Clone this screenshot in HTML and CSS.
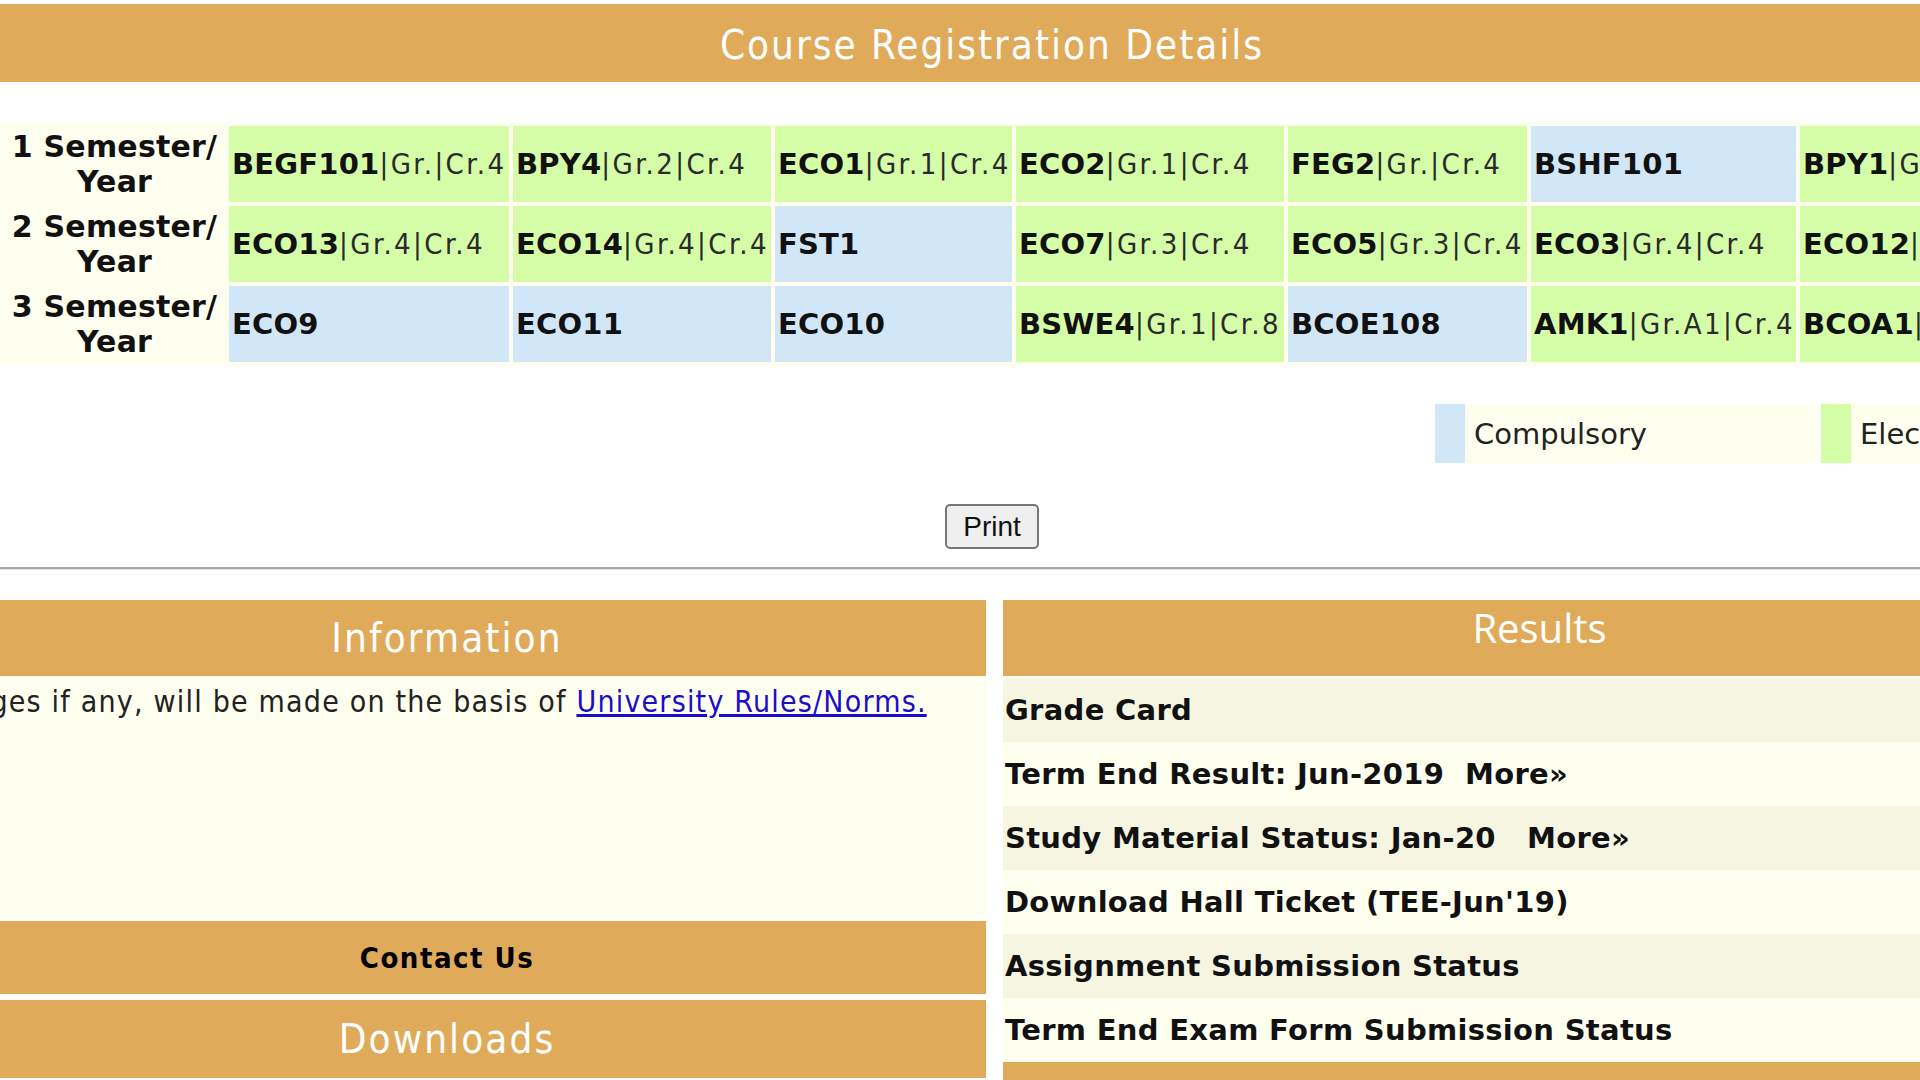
FILE: index.html
```html
<!DOCTYPE html>
<html lang="en">
<head>
<meta charset="utf-8">
<title>Course Registration Details</title>
<link rel="stylesheet" href="styles.css">
</head>
<body>
<div class="page">
  <div class="title-bar">Course Registration Details</div>

  <div class="reg-table">
    <div class="lbl">1 Semester/<br>Year</div>
    <div class="cell el"><b>BEGF101</b><span>|Gr.|Cr.4</span></div>
    <div class="cell el"><b>BPY4</b><span>|Gr.2|Cr.4</span></div>
    <div class="cell el"><b>ECO1</b><span>|Gr.1|Cr.4</span></div>
    <div class="cell el"><b>ECO2</b><span>|Gr.1|Cr.4</span></div>
    <div class="cell el"><b>FEG2</b><span>|Gr.|Cr.4</span></div>
    <div class="cell co"><b>BSHF101</b></div>
    <div class="cell el"><b>BPY1</b><span>|Gr.1|Cr.4</span></div>

    <div class="lbl">2 Semester/<br>Year</div>
    <div class="cell el"><b>ECO13</b><span>|Gr.4|Cr.4</span></div>
    <div class="cell el"><b>ECO14</b><span>|Gr.4|Cr.4</span></div>
    <div class="cell co"><b>FST1</b></div>
    <div class="cell el"><b>ECO7</b><span>|Gr.3|Cr.4</span></div>
    <div class="cell el"><b>ECO5</b><span>|Gr.3|Cr.4</span></div>
    <div class="cell el"><b>ECO3</b><span>|Gr.4|Cr.4</span></div>
    <div class="cell el"><b>ECO12</b><span>|Gr.4|Cr.4</span></div>

    <div class="lbl">3 Semester/<br>Year</div>
    <div class="cell co"><b>ECO9</b></div>
    <div class="cell co"><b>ECO11</b></div>
    <div class="cell co"><b>ECO10</b></div>
    <div class="cell el"><b>BSWE4</b><span>|Gr.1|Cr.8</span></div>
    <div class="cell co"><b>BCOE108</b></div>
    <div class="cell el"><b>AMK1</b><span>|Gr.A1|Cr.4</span></div>
    <div class="cell el"><b>BCOA1</b><span>|Gr.1|Cr.4</span></div>
  </div>

  <div class="legend">
    <div class="sw co"></div>
    <div class="lg-text">Compulsory</div>
    <div class="sw el"></div>
    <div class="lg-text">Elective</div>
  </div>

  <div class="print-row"><button class="print-btn" type="button">Print</button></div>

  <div class="rule"></div>

  <div class="panels">
    <div class="left-col">
      <div class="panel-head">Information</div>
      <div class="info-body">
        <p class="info-text">Changes if any, will be made on the basis of <a href="#">University Rules/Norms.</a></p>
      </div>
      <div class="contact-bar">Contact Us</div>
      <div class="panel-head downloads">Downloads</div>
    </div>
    <div class="right-col">
      <div class="results-head">Results</div>
      <div class="res-row alt">Grade Card</div>
      <div class="res-row">Term End Result: Jun-2019&nbsp;&nbsp;More»</div>
      <div class="res-row alt">Study Material Status: Jan-20&nbsp;&nbsp;&nbsp;More»</div>
      <div class="res-row">Download Hall Ticket (TEE-Jun'19)</div>
      <div class="res-row alt">Assignment Submission Status</div>
      <div class="res-row">Term End Exam Form Submission Status</div>
      <div class="res-foot"></div>
    </div>
  </div>
</div>
</body>
</html>
```

FILE: styles.css
```css
html, body {
  margin: 0;
  padding: 0;
  background: #ffffff;
  overflow: hidden;
}

body {
  font-family: "DejaVu Sans", Verdana, sans-serif;
  font-size: 29px;
  color: #111111;
}

.page {
  width: 2168px;
  margin-left: -92px;
  padding-top: 4px;
}

.title-bar {
  height: 78px;
  box-sizing: border-box;
  padding-top: 4px;
  background: #dfab5b;
  color: #ffffff;
  font-family: "DejaVu Sans Condensed", "DejaVu Sans", sans-serif;
  font-stretch: condensed;
  font-size: 40px;
  letter-spacing: 2px;
  display: flex;
  align-items: center;
  justify-content: center;
}

.reg-table {
  margin: 40px 0 0 92px;
  width: 2000px;
  padding: 4px 0 4px 4px;
  background: #fffff0;
  display: grid;
  grid-template-columns: 221px 280px 258px 237px 268px 239px 265px 300px;
  grid-auto-rows: 76px;
  column-gap: 4px;
  row-gap: 4px;
}

.lbl {
  font-weight: bold;
  font-size: 30px;
  letter-spacing: 0.2px;
  text-align: center;
  line-height: 35px;
  display: flex;
  align-items: center;
  justify-content: center;
}

.cell {
  display: flex;
  align-items: center;
  padding-left: 3px;
  white-space: nowrap;
  overflow: hidden;
}

.cell b {
  font-weight: bold;
  letter-spacing: 0.2px;
  color: #111111;
}

.cell span {
  font-family: "DejaVu Sans Condensed", "DejaVu Sans", sans-serif;
  font-stretch: condensed;
  letter-spacing: 2.4px;
  color: #2a2a2a;
}

.el { background: #d5fca7; }
.co { background: #d1e7f8; }

.legend {
  display: flex;
  height: 59px;
  margin: 38px 0 0 1527px;
}

.sw {
  width: 30px;
  flex: none;
}

.lg-text {
  width: 344px;
  flex: none;
  padding-left: 9px;
  margin-right: 3px;
  background: #fffff0;
  color: #222222;
  display: flex;
  align-items: center;
}

.print-row {
  display: flex;
  justify-content: center;
  margin-top: 41px;
}

.print-btn {
  width: 94px;
  height: 45px;
  padding: 0;
  font-family: "Liberation Sans", Arial, sans-serif;
  font-size: 28px;
  color: #111111;
  background: #efefef;
  border: 2px solid #767676;
  border-radius: 5px;
}

.rule {
  margin-top: 18px;
  height: 0;
  border-top: 2px solid #a8a8a8;
  border-bottom: 1px solid #e8e8e8;
}

.panels {
  margin-top: 30px;
  display: flex;
  gap: 17px;
}

.left-col {
  width: 1078px;
  flex: none;
  display: flex;
  flex-direction: column;
}

.right-col {
  width: 1073px;
  flex: none;
  display: flex;
  flex-direction: column;
}

.panel-head {
  height: 76px;
  background: #dfab5b;
  color: #ffffff;
  font-family: "DejaVu Sans Condensed", "DejaVu Sans", sans-serif;
  font-stretch: condensed;
  font-size: 40px;
  letter-spacing: 2.1px;
  display: flex;
  align-items: center;
  justify-content: center;
}

.info-body {
  height: 242px;
  background: #fffff0;
  padding: 8px 0 0 8px;
  box-sizing: border-box;
}

.info-text {
  margin: 0;
  font-family: "DejaVu Sans Condensed", "DejaVu Sans", sans-serif;
  font-stretch: condensed;
  font-size: 30px;
  letter-spacing: 1.2px;
  line-height: 36px;
  color: #222222;
  white-space: nowrap;
}

.info-text a {
  color: #1a0dcc;
  text-decoration: underline;
}

.contact-bar {
  height: 73px;
  margin-top: 3px;
  background: #dfab5b;
  color: #000000;
  font-family: "DejaVu Sans Condensed", "DejaVu Sans", sans-serif;
  font-stretch: condensed;
  font-weight: bold;
  font-size: 29px;
  letter-spacing: 1.5px;
  display: flex;
  align-items: center;
  justify-content: center;
}

.downloads {
  margin-top: 6px;
  height: 78px;
}

.results-head {
  height: 76px;
  background: #dfab5b;
  color: #ffffff;
  font-family: "Open Sans", sans-serif;
  font-size: 40px;
  line-height: 54px;
  text-align: center;
  box-sizing: border-box;
  padding-top: 1px;
  margin-bottom: 2px;
}

.res-row {
  height: 64px;
  background: #fffff0;
  font-weight: bold;
  letter-spacing: 0.3px;
  padding-left: 2px;
  display: flex;
  align-items: center;
  white-space: nowrap;
  color: #111111;
}

.res-row.alt {
  background: #f5f5e1;
}

.res-foot {
  height: 40px;
  background: #dfab5b;
}
```
